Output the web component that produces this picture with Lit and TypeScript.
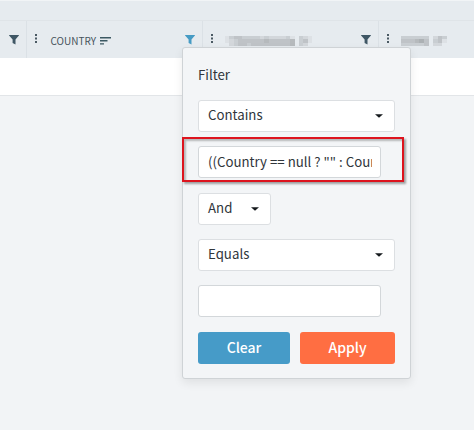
import { LitElement, html, css, svg } from 'lit';
import { customElement, property } from 'lit/decorators.js';

interface Mosaic {
  width: number;
  tile: number;
  rows: string[];
}

const MOSAICS: Record<string, Mosaic> = {
  status: {
    width: 87,
    tile: 4.35,
    rows: ['13443333232222310321', '12344444454444450341', '02344344444444450320'],
  },
  name: {
    width: 46,
    tile: 4.6,
    rows: ['3333330243', '4445640341', '3333340220'],
  },
};

@customElement('filter-icon')
class FilterIcon extends LitElement {
  render() {
    return html`
      <svg width="10" height="10" viewBox="0 0 10 10">
        <path d="M.3 0h9.4c.3 0 .4.3.2.5L6.5 4.6V9.5L3.6 8V4.6L.1.5C-.1.3 0 0 .3 0z" fill="currentColor" />
      </svg>
    `;
  }

  static get styles() {
    return css`
      :host,
      svg {
        display: block;
      }
    `;
  }
}

@customElement('grid-column')
class GridColumn extends LitElement {
  @property()
  label: string = '';

  @property()
  mosaic: string = '';

  @property({ type: Boolean })
  active: boolean = false;

  renderMosaic(mosaic: Mosaic) {
    const { rows, tile, width } = mosaic;
    return html`
      <svg class="mosaic" width=${width} height="10" viewBox="0 0 ${width} 10" shape-rendering="crispEdges">
        ${rows.map((row, y) =>
          [...row].map(
            (level, x) =>
              svg`<rect x=${x * tile} y=${y * 4 - 1} width=${tile} height="4" fill="#6d7174" fill-opacity=${Number(level) * 0.08} />`
          )
        )}
      </svg>
    `;
  }

  render() {
    return html`
      <div class="column">
        <svg class="dots" width="2" height="9" viewBox="0 0 2 9">
          <path d="M0 0h2v2H0zM0 3.5h2v2H0zM0 7h2v2H0z" fill="#4a5963" />
        </svg>
        ${this.label
          ? html`
              <span class="label">${this.label}</span>
              <svg class="sort" width="11" height="8" viewBox="0 0 11 8">
                <path d="M0 .7h11M0 3.8h7.5M0 6.9h4" stroke="#3c5963" stroke-width="1.4" />
              </svg>
            `
          : ''}
        ${this.mosaic ? this.renderMosaic(MOSAICS[this.mosaic]) : ''}
        <filter-icon class="filter ${this.active ? 'active' : ''}"></filter-icon>
      </div>
    `;
  }

  static get styles() {
    return css`
      :host {
        display: block;
      }
      .column {
        box-sizing: border-box;
        height: 37px;
        padding: 0 7px 0 8px;
        border-left: 1px solid #dbe1e6;
        display: flex;
        align-items: center;
      }
      .dots {
        flex: none;
        margin-bottom: 2px;
      }
      .label {
        margin: 2px 0 0 14px;
        font-size: 10px;
        line-height: 14px;
        color: #47535c;
      }
      .sort {
        margin: 2px 0 0 4px;
      }
      .mosaic {
        flex: none;
        margin: 3px 0 0 12px;
      }
      .filter {
        margin-left: auto;
        color: #3f5765;
      }
      .filter.active {
        color: #469bc4;
      }
    `;
  }
}

@customElement('filter-select')
class FilterSelect extends LitElement {
  @property()
  value: string = '';

  render() {
    return html`
      <div class="select">
        <span class="value">${this.value}</span>
        <svg width="8" height="4" viewBox="0 0 8 4"><path d="M0 .2h8L4 3.8z" fill="#15191c" /></svg>
      </div>
    `;
  }

  static get styles() {
    return css`
      :host {
        display: block;
      }
      .select {
        box-sizing: border-box;
        height: 32px;
        padding: 0 11px 0 9px;
        border: 1px solid #dcdfe2;
        border-radius: 3px;
        background: #fff;
        display: flex;
        align-items: center;
        justify-content: space-between;
      }
      .value {
        margin-bottom: 2px;
      }
    `;
  }
}

@customElement('filter-popup')
class FilterPopup extends LitElement {
  render() {
    return html`
      <div class="popup">
        <div class="title">Filter</div>
        <filter-select value="Contains"></filter-select>
        <input class="input" .value=${'((Country == null ? "" : Country)'} />
        <filter-select class="operator" value="And"></filter-select>
        <filter-select value="Equals"></filter-select>
        <input class="input" />
        <div class="actions">
          <button class="clear">Clear</button>
          <button class="apply">Apply</button>
        </div>
      </div>
    `;
  }

  static get styles() {
    return css`
      .popup {
        box-sizing: border-box;
        width: 229px;
        height: 332px;
        padding: 16.5px 15px 14px;
        border: 1px solid #cfd3d6;
        border-radius: 3px;
        background: #f3f5f7;
        box-shadow: 0 4px 10px rgba(0, 0, 0, 0.08);
        display: flex;
        flex-direction: column;
        gap: 14.4px;
        font-size: 13.25px;
        line-height: 20px;
        color: #30363b;
      }
      .title {
        height: 21px;
      }
      .operator {
        width: 73px;
      }
      .input {
        box-sizing: border-box;
        width: 183px;
        height: 32px;
        margin: 0;
        padding: 0 8px 1px 9px;
        border: 1px solid #d3d7da;
        border-radius: 3px;
        outline: none;
        background: #fff;
        font: inherit;
        color: inherit;
      }
      .actions {
        display: grid;
        grid-template-columns: 92px 95px;
        gap: 10px;
      }
      button {
        height: 32px;
        padding: 0 0 1px;
        border: none;
        border-radius: 3px;
        font: 500 14px/20px 'Noto Sans CJK SC', sans-serif;
        color: #fff;
      }
      .clear {
        background: #469bc8;
      }
      .apply {
        background: #ff6e42;
      }
    `;
  }
}

@customElement('app-root')
class AppRoot extends LitElement {
  render() {
    return html`
      <div class="page">
        <div class="group-bar"></div>
        <div class="header">
          <div class="first"><filter-icon></filter-icon></div>
          <grid-column label="COUNTRY" active></grid-column>
          <grid-column mosaic="status"></grid-column>
          <grid-column mosaic="name"></grid-column>
        </div>
        <div class="row"></div>
        <filter-popup class="popup"></filter-popup>
        <div class="highlight"></div>
      </div>
    `;
  }

  static get styles() {
    return css`
      :host {
        display: block;
      }
      .page {
        position: relative;
        width: 474px;
        height: 430px;
        overflow: hidden;
        background: #f2f4f6;
        font-family: 'Noto Sans CJK SC', sans-serif;
      }
      .group-bar {
        box-sizing: border-box;
        height: 21px;
        border-top: 1px solid #f1f4f6;
        border-bottom: 1px solid #dfe4e8;
        background: #e6ebef;
      }
      .header {
        display: grid;
        grid-template-columns: 25.5px 176px 176px 176px;
        background: #e6ebef;
      }
      .first {
        display: flex;
        align-items: center;
        padding-left: 9px;
        color: #3f5765;
      }
      .row {
        box-sizing: border-box;
        height: 38px;
        border-bottom: 1px solid #e2e5e8;
        background: #fff;
      }
      .popup {
        position: absolute;
        left: 182px;
        top: 47px;
      }
      .highlight {
        position: absolute;
        box-sizing: border-box;
        left: 182px;
        top: 137px;
        width: 222px;
        height: 45px;
        border: 2px solid #dd141e;
        box-shadow: 2px 2px 2px rgba(0, 0, 0, 0.35), inset 2px 2px 2px rgba(0, 0, 0, 0.25);
      }
    `;
  }
}
